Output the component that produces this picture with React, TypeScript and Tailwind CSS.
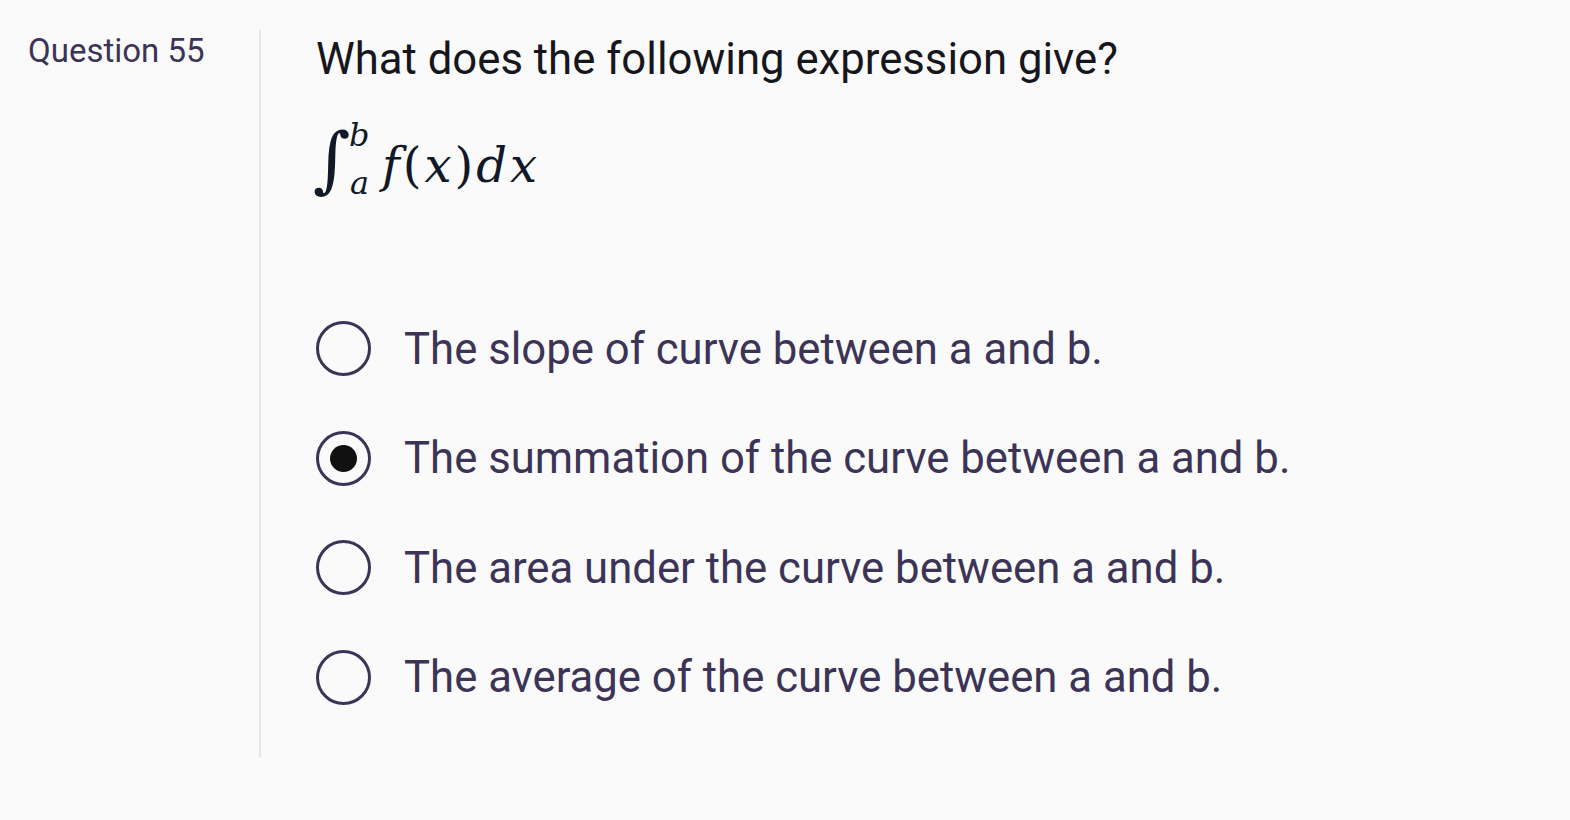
import React from "react";

const options = [
  "The slope of curve between a and b.",
  "The summation of the curve between a and b.",
  "The area under the curve between a and b.",
  "The average of the curve between a and b.",
];

const serif = { fontFamily: '"DejaVu Serif", serif' };

export default function App() {
  return (
    <div className="w-[1570px] h-[820px] bg-[#fafafa] flex" style={{ fontFamily: "Roboto, sans-serif" }}>
      <div className="w-[259px] pl-[28px] pt-[31px] text-[33px] leading-[40px] text-[#3b3457] shrink-0">
        Question 55
      </div>
      <div className="mt-[30px] h-[727px] w-[2px] bg-[#e6e6e6] shrink-0" />
      <div className="pl-[55px] pt-[33px] flex flex-col">
        <div className="text-[43.7px] leading-[52px] text-[#16161d]">What does the following expression give?</div>
        <div className="mt-[38px] h-[82px] flex items-start text-[#111827]" style={serif}>
          <span className="relative inline-block w-[64px] h-[82px] shrink-0">
            <span className="absolute left-[-3px] top-[0px] text-[72px] leading-none" style={serif}>∫</span>
            <span className="absolute left-[33px] top-[-4px] text-[32px] italic leading-none" style={serif}>b</span>
            <span className="absolute left-[34px] top-[44px] text-[32px] italic leading-none" style={serif}>a</span>
          </span>
          <span className="ml-[2px] mt-[18px] text-[48px] italic leading-none tracking-[3px]" style={serif}>
            f<span className="not-italic">(</span>x<span className="not-italic">)</span>dx
          </span>
        </div>
        <div className="mt-[116px] flex flex-col gap-[54.5px]">
          {options.map((o, i) => (
            <div key={o} className="flex items-center h-[55px]">
              <div className="w-[55px] h-[55px] rounded-full border-[3px] border-[#3b3457] flex items-center justify-center shrink-0">
                {i === 1 && <div className="w-[27px] h-[27px] rounded-full bg-[#111111]" />}
              </div>
              <div className="ml-[33px] text-[43.7px] leading-[52px] text-[#3b3457]">{o}</div>
            </div>
          ))}
        </div>
      </div>
    </div>
  );
}
